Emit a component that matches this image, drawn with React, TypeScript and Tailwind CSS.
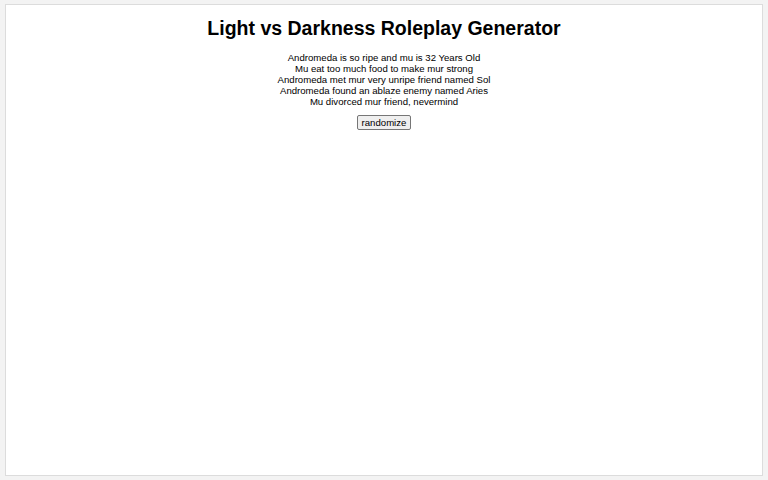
import React, { FC, ReactElement, useState } from "react";

const lines = [
  "Andromeda is so ripe and mu is 32 Years Old",
  "Mu eat too much food to make mur strong",
  "Andromeda met mur very unripe friend named Sol",
  "Andromeda found an ablaze enemy named Aries",
  "Mu divorced mur friend, nevermind",
];

const App: FC = (): ReactElement => {
  const [story] = useState(lines);

  return (
    <div className="w-[768px] h-[480px] bg-[#f3f3f3] p-[4px_5px_4px_5px] font-['Liberation_Sans',Arial,sans-serif]">
      <div className="h-full bg-white border border-[#dcdcdc] flex flex-col items-center">
        <h1 className="mt-[12px] text-[19.5px] leading-[22px] font-bold text-black">
          Light vs Darkness Roleplay Generator
        </h1>
        <div className="mt-[13px] text-[9.6px] leading-[11px] text-black text-center">
          {story.map((line) => (
            <div key={line}>{line}</div>
          ))}
        </div>
        <button className="mt-[8px] h-[15px] px-[4px] text-[9.6px] leading-[13px] text-black bg-[#efefef] border border-[#767676] rounded-[2px]">
          randomize
        </button>
      </div>
    </div>
  );
};

export default App;
